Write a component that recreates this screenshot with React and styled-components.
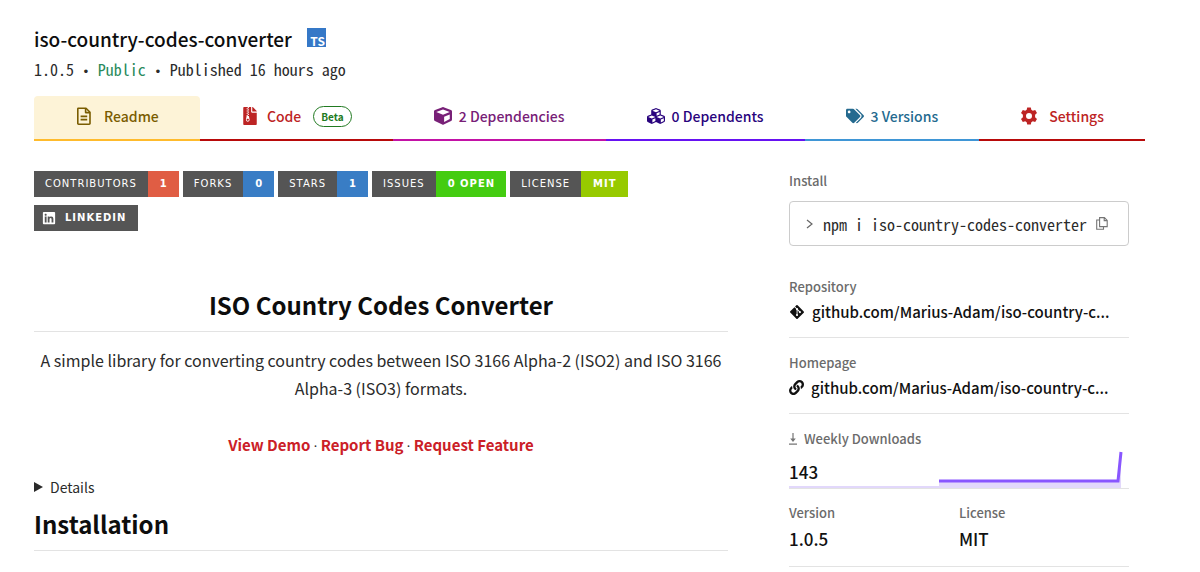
import React from 'react';
import styled, { createGlobalStyle } from 'styled-components';
import {
  FaCube, FaCubes, FaTags, FaFileArchive, FaGitAlt, FaLink, FaLinkedin,
} from 'react-icons/fa';

const tabs = [
  { id: 'readme', label: 'Readme', color: '#7a5c00', line: '#ffbb2c', gap: 11, icon: ReadmeIcon, active: true },
  { id: 'code', label: 'Code', color: '#bd2424', line: '#b80a0a', gap: 8, icon: FaFileArchive, beta: true },
  { id: 'dependencies', label: '2 Dependencies', color: '#782077', line: '#c312a6', gap: 7, icon: FaCube },
  { id: 'dependents', label: '0 Dependents', color: '#29037d', line: '#6612f2', gap: 7, icon: FaCubes },
  { id: 'versions', label: '3 Versions', color: '#246a8f', line: '#3f96d6', gap: 7, icon: FaTags },
  { id: 'settings', label: 'Settings', color: '#bd2424', line: '#b80a0a', gap: 11, icon: GearIcon },
];

const badges = [
  { name: 'Contributors', value: '1', color: '#e05d44' },
  { name: 'Forks', value: '0', color: '#397dc5' },
  { name: 'Stars', value: '1', color: '#397dc5' },
  { name: 'Issues', value: '0 open', color: '#44cc11' },
  { name: 'License', value: 'MIT', color: '#97ca00' },
];

const sans = '"Noto Sans CJK SC", "Noto Sans", sans-serif';
const mono = '"Noto Sans Mono CJK SC", "DejaVu Sans Mono", monospace';

const GlobalStyle = createGlobalStyle`
  * {
    box-sizing: border-box;
  }

  body {
    margin: 0;
    background: #fff;
    color: #2b2b2b;
    font-family: ${sans};
    font-size: 14px;
  }

  h1, h2, h3, p, ul {
    margin: 0;
    padding: 0;
  }

  a {
    color: inherit;
    text-decoration: none;
  }
`;

const Page = styled.div`
  padding: 23px 55px 0 34px;
`;

const PackageName = styled.h1`
  display: flex;
  align-items: center;
  gap: 15px;
  color: #0d0d0d;
  font-size: 19px;
  font-weight: 500;
  line-height: 32px;
`;

const TsBadge = styled.span`
  display: flex;
  align-items: flex-end;
  justify-content: flex-end;
  width: 19px;
  height: 19px;
  margin-bottom: 4px;
  padding-right: 1px;
  background: #3578c7;
  color: #fff;
  font-size: 12px;
  font-weight: 700;
  line-height: 13px;
`;

const Meta = styled.p`
  font-family: ${mono};
  font-size: 16px;
  line-height: 28px;
`;

const Visibility = styled.span`
  color: #2a8a5c;
`;

// the CJK faces draw bullets and middots full width
const Dot = styled.span`
  font-family: ${({ $mono }) => ($mono ? '"Liberation Mono", monospace' : '"Noto Sans", sans-serif')};
  font-size: 13px;
  line-height: 1;
`;

const TabList = styled.ul`
  display: flex;
  margin-top: 13px;
  list-style: none;
`;

const TabItem = styled.li`
  flex: 1 1 auto;
`;

const TabLink = styled.a`
  display: flex;
  align-items: center;
  justify-content: center;
  gap: ${({ $gap }) => $gap}px;
  height: 45px;
  padding-bottom: 3px;
  border-bottom: 2px solid ${({ $line }) => $line};
  border-radius: ${({ $active }) => ($active ? '4px 4px 0 0' : 0)};
  background: ${({ $active }) => ($active ? '#fdf3d7' : 'transparent')};
  color: ${({ $color }) => $color};
  font-size: 14px;
  font-weight: 500;

  svg {
    flex: none;
    width: 18px;
    height: 18px;
  }
`;

const Beta = styled.span`
  margin-left: 4px;
  padding: 0 7px;
  border: 1px solid #217a21;
  border-radius: 11px;
  color: #217a21;
  font-size: 10px;
  font-weight: 700;
  line-height: 19px;
`;

const Columns = styled.div`
  display: grid;
  grid-template-columns: minmax(0, 694fr) minmax(0, 340fr);
  gap: 61px;
  padding: 30px 16px 0 0;
`;

const Badges = styled.div`
  display: flex;
  flex-wrap: wrap;
  gap: 8px 4px;
  padding-right: 80px;
`;

const Badge = styled.a`
  display: flex;
  color: #fff;
  font-family: Verdana, "DejaVu Sans", sans-serif;
  font-size: 10px;
  line-height: 26px;
  letter-spacing: 1px;
  text-transform: uppercase;
`;

const BadgeName = styled.span`
  display: flex;
  align-items: center;
  gap: ${({ $bold }) => ($bold ? 9 : 0)}px;
  padding: 0 ${({ $bold }) => ($bold ? 12 : 11)}px 0 ${({ $bold }) => ($bold ? 8 : 11)}px;
  background: #555;
  font-weight: ${({ $bold }) => ($bold ? 700 : 400)};

  svg {
    width: 14px;
    height: 14px;
  }
`;

const BadgeValue = styled.span`
  padding: 0 11px 0 12px;
  background: ${({ $color }) => $color};
  font-weight: 700;
`;

const Heading = styled.h2`
  padding-bottom: 8px;
  border-bottom: 1px solid #e3e3e3;
  color: #0d0d0d;
  font-size: 24px;
  font-weight: 700;
  line-height: 36px;
`;

const Intro = styled.section`
  margin-top: 56px;
  text-align: center;
`;

const Paragraph = styled.p`
  margin: 14px 0 29px;
  font-size: 16px;
  line-height: 28px;
`;

const Links = styled.p`
  margin-bottom: 14px;
  font-size: 15px;
  line-height: 28px;
`;

const RedLink = styled.a`
  color: #cb2027;
  font-weight: 700;
`;

const Details = styled.details`
  margin-bottom: 5px;
  font-size: 14px;
  line-height: 28px;

  summary {
    display: flex;
    align-items: center;
    gap: 7px;
    cursor: pointer;
  }
`;

const Label = styled.h3`
  display: flex;
  align-items: center;
  gap: 7px;
  color: #6b6b6b;
  font-size: 13px;
  font-weight: 500;
  line-height: 20px;
`;

const Command = styled.div`
  display: flex;
  align-items: center;
  gap: 9px;
  height: 45px;
  margin: 10px 0 31px;
  padding: 0 16px;
  border: 1px solid #ccc;
  border-radius: 4px;
  white-space: nowrap;

  svg {
    flex: none;
  }

  code {
    font-family: ${mono};
    font-size: 16px;
    line-height: 28px;
  }
`;

const CopyButton = styled.button`
  display: flex;
  padding: 0;
  border: 0;
  background: none;
  color: #757575;
`;

const SideBlock = styled.section`
  margin-bottom: 15px;
  padding-bottom: 11px;
  border-bottom: 1px solid #e3e3e3;
`;

const SideLink = styled.a`
  display: flex;
  align-items: center;
  gap: 7px;
  color: #111;
  font-size: 15px;
  font-weight: 500;
  line-height: 29px;

  svg {
    flex: none;
  }
`;

const Downloads = styled.div`
  display: flex;
  align-items: flex-end;
  border-bottom: 1px solid #e3e3e3;
  margin-bottom: 14px;

  svg {
    display: block;
    flex: none;
  }
`;

const Value = styled.p`
  color: #111;
  font-size: 17px;
  font-weight: 500;
  line-height: 32px;
`;

const DownloadCount = styled(Value)`
  flex: 1;
  box-shadow: inset 0 -2px #e2d8fb;
`;

const Facts = styled.div`
  display: grid;
  grid-template-columns: 1fr 1fr;
  padding-bottom: 11px;
  border-bottom: 1px solid #e3e3e3;
`;

function ReadmeIcon() {
  return (
    <svg viewBox="0 0 18 18" fill="none" stroke="currentColor" strokeWidth="1.6" strokeLinejoin="round">
      <path d="M3 1.2h8l4 4v11.2a.8.8 0 0 1-.8.8H3.6a.8.8 0 0 1-.8-.8V1.8a.8.8 0 0 1 .8-.6z" />
      <path d="M10.6 1.4v4.2H15M5.6 9.4h6.6M5.6 12.6h6.6" />
    </svg>
  );
}

function GearIcon() {
  return (
    <svg viewBox="0 0 18 18" fill="currentColor" fillRule="evenodd">
      <path d="M7.2.4h3.6l.5 2.4 1.5.9 2.4-.8L17 6l-1.9 1.7v2.6L17 12l-1.8 3.1-2.4-.8-1.5.9-.5 2.4H7.2l-.5-2.4-1.5-.9-2.4.8L1 12l1.9-1.7V7.7L1 6l1.8-3.1 2.4.8 1.5-.9zM9 6a3 3 0 1 0 0 6 3 3 0 0 0 0-6z" />
    </svg>
  );
}

function Tab({ tab }) {
  const Icon = tab.icon;
  return (
    <TabItem>
      <TabLink href={`#${tab.id}`} $gap={tab.gap} $line={tab.line} $color={tab.color} $active={tab.active}>
        <Icon />
        {tab.label}
        {tab.beta && <Beta>Beta</Beta>}
      </TabLink>
    </TabItem>
  );
}

export default function App() {
  return (
    <Page>
      <GlobalStyle />
      <header>
        <PackageName>
          iso-country-codes-converter
          <TsBadge>TS</TsBadge>
        </PackageName>
        <Meta>
          1.0.5 <Dot $mono>•</Dot> <Visibility>Public</Visibility> <Dot $mono>•</Dot> Published 16 hours ago
        </Meta>
      </header>

      <nav>
        <TabList>
          {tabs.map((tab) => <Tab key={tab.id} tab={tab} />)}
        </TabList>
      </nav>

      <Columns>
        <main>
          <Badges>
            {badges.map((badge) => (
              <Badge key={badge.name} href="#badge">
                <BadgeName>{badge.name}</BadgeName>
                <BadgeValue $color={badge.color}>{badge.value}</BadgeValue>
              </Badge>
            ))}
            <Badge href="#linkedin">
              <BadgeName $bold>
                <FaLinkedin />
                LinkedIn
              </BadgeName>
            </Badge>
          </Badges>

          <Intro>
            <Heading>ISO Country Codes Converter</Heading>
            <Paragraph>
              A simple library for converting country codes between ISO 3166 Alpha-2 (ISO2) and ISO 3166 Alpha-3 (ISO3) formats.
            </Paragraph>
            <Links>
              <RedLink href="#demo">View Demo</RedLink>
              {' '}
              <Dot>·</Dot>
              {' '}
              <RedLink href="#bug">Report Bug</RedLink>
              {' '}
              <Dot>·</Dot>
              {' '}
              <RedLink href="#feature">Request Feature</RedLink>
            </Links>
          </Intro>

          <Details>
            <summary>
              <svg width="9" height="10" viewBox="0 0 9 10">
                <path d="M0 0l9 5-9 5z" fill="#2b2b2b" />
              </svg>
              Details
            </summary>
          </Details>
          <Heading>Installation</Heading>
        </main>

        <aside>
          <Label>Install</Label>
          <Command>
            <svg width="8" height="10" viewBox="0 0 8 10" fill="none" stroke="#666" strokeWidth="1.2">
              <path d="M1 1l5 4-5 4" />
            </svg>
            <code>npm i iso-country-codes-converter</code>
            <CopyButton type="button" aria-label="Copy install command">
              <svg width="12" height="13" viewBox="0 0 12 13" fill="none" stroke="currentColor" strokeWidth="1.1">
                <path d="M3.6.6h4.8l2.8 2.8v6.2H3.6zM8.2.8v2.8h2.8M3.4 3H.7v9.2h6.8V9.8" />
              </svg>
            </CopyButton>
          </Command>

          <SideBlock>
            <Label>Repository</Label>
            <SideLink href="#repository">
              <FaGitAlt size={16} />
              github.com/Marius-Adam/iso-country-c...
            </SideLink>
          </SideBlock>

          <SideBlock>
            <Label>Homepage</Label>
            <SideLink href="#homepage">
              <FaLink size={15} />
              github.com/Marius-Adam/iso-country-c...
            </SideLink>
          </SideBlock>

          <Label>
            <svg width="8" height="12" viewBox="0 0 8 12" fill="#757575">
              <path d="M3.4 0h1.2v5.6h2.2L4 9 1.2 5.6h2.2zM0 10.6h8v1.2H0z" />
            </svg>
            Weekly Downloads
          </Label>
          <Downloads>
            <DownloadCount>143</DownloadCount>
            <svg width="190" height="39" viewBox="0 0 190 39">
              <path d="M0 32h178l4-28v35H0z" fill="#e2d8fb" />
              <path d="M0 32h179l3-29" fill="none" stroke="#8956ff" strokeWidth="3" />
            </svg>
          </Downloads>

          <Facts>
            <Label>Version</Label>
            <Label>License</Label>
            <Value>1.0.5</Value>
            <Value>MIT</Value>
          </Facts>
        </aside>
      </Columns>
    </Page>
  );
}
